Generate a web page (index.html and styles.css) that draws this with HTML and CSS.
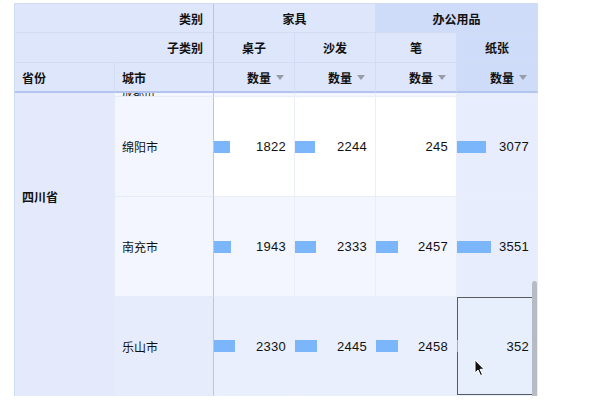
FILE: index.html
```html
<!DOCTYPE html>
<html lang="zh">
<head>
<meta charset="utf-8">
<title>透视表</title>
<link rel="stylesheet" href="styles.css">
</head>
<body>
<div class="table">
  <div class="head">
    <div class="hc span2 right">类别</div>
    <div class="hc span2 center">家具</div>
    <div class="hc span2 center hl">办公用品</div>

    <div class="hc span2 right">子类别</div>
    <div class="hc center">桌子</div>
    <div class="hc center">沙发</div>
    <div class="hc center">笔</div>
    <div class="hc center hl">纸张</div>

    <div class="hc last left">省份</div>
    <div class="hc last left frozen">城市</div>
    <div class="hc last right">数量<span class="tri"></span></div>
    <div class="hc last right">数量<span class="tri"></span></div>
    <div class="hc last right">数量<span class="tri"></span></div>
    <div class="hc last right hl">数量<span class="tri"></span></div>
  </div>

  <div class="viewport">
    <div class="grid">
      <div class="prov">四川省</div>

      <div class="city stick"><span class="stuck">成都市</span></div>
      <div class="dc r0"></div>
      <div class="dc r0"></div>
      <div class="dc r0"></div>
      <div class="dc r0 col"></div>

      <div class="city">绵阳市</div>
      <div class="dc r1"><span class="bar" style="width:16px"></span><span class="num">1822</span></div>
      <div class="dc r1"><span class="bar" style="width:20px"></span><span class="num">2244</span></div>
      <div class="dc r1"><span class="bar" style="width:0px"></span><span class="num">245</span></div>
      <div class="dc r1 col"><span class="bar" style="width:29px"></span><span class="num">3077</span></div>

      <div class="city">南充市</div>
      <div class="dc r2"><span class="bar" style="width:17px"></span><span class="num">1943</span></div>
      <div class="dc r2"><span class="bar" style="width:21px"></span><span class="num">2333</span></div>
      <div class="dc r2"><span class="bar" style="width:22px"></span><span class="num">2457</span></div>
      <div class="dc r2 col"><span class="bar" style="width:34px"></span><span class="num">3551</span></div>

      <div class="city hover">乐山市</div>
      <div class="dc hover"><span class="bar" style="width:21px"></span><span class="num">2330</span></div>
      <div class="dc hover"><span class="bar" style="width:22px"></span><span class="num">2445</span></div>
      <div class="dc hover"><span class="bar" style="width:22px"></span><span class="num">2458</span></div>
      <div class="dc hover sel"><span class="bar" style="width:1px"></span><span class="num">352</span></div>
    </div>
    <div class="scrollbar"></div>
    <svg class="cursor" width="12" height="18" viewBox="0 0 12 18">
      <path d="M1 1 L1 14 L4 11 L6.5 16.5 L8.5 15.6 L6 10.3 L10 10.3 Z" fill="#111" stroke="#fff" stroke-width="1" stroke-linejoin="round"/>
    </svg>
  </div>
</div>
</body>
</html>
```

FILE: styles.css
```css
* { box-sizing: border-box; }

body {
  margin: 0;
  background: #ffffff;
  font-family: "Noto Sans CJK SC", "Liberation Sans", sans-serif;
  font-size: 12px;
  color: #1b1b1b;
}

.table {
  margin: 3px 0 0 14px;
  width: 524px;
  border-left: 1px solid #cfdaf3;
  border-top: 1px solid #cfdaf3;
}

.head {
  display: grid;
  grid-template-columns: 100px 99px repeat(4, 81px);
  grid-template-rows: 29px 30px 30px;
  background: #dde6fb;
}

.hc {
  display: flex;
  align-items: center;
  font-weight: 600;
  color: #111;
  border-right: 1px solid #d2ddf5;
  border-bottom: 1px solid #d2ddf5;
  white-space: nowrap;
}

.hc:nth-child(1),
.hc:nth-child(4) { border-right-color: #b5c6ee; }

.span2 { grid-column: span 2; }
.right { justify-content: flex-end; padding-right: 10px; }
.center { justify-content: center; }
.left { justify-content: flex-start; padding-left: 7px; }
.hl { background: #cedbf9; }

.hc.last { border-bottom: 2px solid #b3c5ee; }
.hc.frozen { border-right-color: #b5c6ee; }

.tri {
  width: 0;
  height: 0;
  margin-left: 5px;
  border-left: 4px solid transparent;
  border-right: 4px solid transparent;
  border-top: 5px solid #979ca6;
}

.viewport {
  position: relative;
  height: 303px;
  overflow: hidden;
}

.grid {
  display: grid;
  grid-template-columns: 100px 99px repeat(4, 81px);
  grid-template-rows: 100px 100px 100px 99px;
  margin-top: -96px;
}

.prov {
  grid-row: 1 / span 4;
  grid-column: 1;
  display: flex;
  align-items: center;
  padding-left: 7px;
  font-weight: 600;
  color: #111;
  background: #e4eafb;
  border-right: 1px solid #e6ebf8;
}

.city {
  display: flex;
  align-items: center;
  padding-left: 7px;
  background: #f3f6fe;
  border-right: 1px solid #b5c6ee;
  border-bottom: 1px solid #e6ebf8;
  color: #111;
}

.city.stick {
  align-items: flex-end;
  overflow: hidden;
}

.stuck {
  display: block;
  height: 5px;
  line-height: 5px;
  font-size: 11px;
  overflow: hidden;
  margin-bottom: 0;
}

.city.hover { background: #e6ecfb; }

.dc {
  display: flex;
  align-items: center;
  justify-content: space-between;
  padding-right: 8px;
  border-right: 1px solid #eaeef8;
  border-bottom: 1px solid #eaeef8;
  background: #ffffff;
}

.dc.r0 { background: #f3f6fe; }
.dc.r1 { background: #ffffff; }
.dc.r2 { background: #f3f6fe; }
.dc.col { background: #e7edfc; }
.dc.hover { background: #e9effc; }
.dc.sel {
  background: #e7eefc;
  box-shadow: inset 0 0 0 1px #555a63;
}

.bar {
  display: block;
  height: 12px;
  background: #7bb6fb;
}

.num {
  color: #111;
  font-family: "Liberation Sans", "Noto Sans", sans-serif;
  font-size: 13px;
  letter-spacing: 0.3px;
}

.scrollbar {
  position: absolute;
  left: 517px;
  top: 188px;
  width: 5px;
  height: 115px;
  border-radius: 3px 3px 0 0;
  background: #b6bbc4;
}

.cursor {
  position: absolute;
  left: 459px;
  top: 266px;
}
```
